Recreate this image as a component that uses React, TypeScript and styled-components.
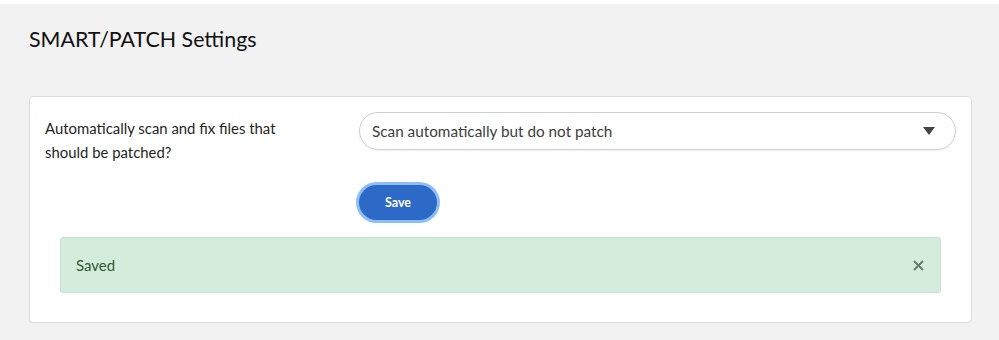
import React, { useState } from 'react';
import styled, { createGlobalStyle } from 'styled-components';

const GlobalStyle = createGlobalStyle`
  html, body {
    margin: 0;
    padding: 0;
    background: #ffffff;
  }
  body {
    font-family: Lato, 'Noto Sans', sans-serif;
    color: #222;
  }
`;

const Page = styled.div`
  margin-top: 4px;
  background: #f2f2f2;
  min-height: 336px;
  padding: 0 27px 0 29px;
  box-sizing: border-box;
`;

const Title = styled.h1`
  margin: 0;
  padding: 18px 0 40px;
  font-size: 21.4px;
  font-weight: 400;
  line-height: 34px;
  color: #111;
`;

const Card = styled.section`
  background: #fff;
  border: 1px solid #dcdcdc;
  border-radius: 4px;
  padding: 15px 15px 29px;
`;

const FormRow = styled.div`
  display: grid;
  grid-template-columns: 298px 1fr;
  column-gap: 16px;
  align-items: start;
`;

const Label = styled.label`
  max-width: 250px;
  font-size: 14.9px;
  line-height: 24px;
  color: #1f1f1f;
  padding-top: 4px;
`;

const SelectBox = styled.div`
  height: 38px;
  border: 1px solid #cdd0d6;
  border-radius: 19px;
  box-shadow: 0 1px 2px rgba(0, 0, 0, 0.06);
  display: flex;
  align-items: center;
  padding: 0 20px 0 12px;
  box-sizing: border-box;
  font-size: 15.3px;
  color: #3d3d3d;
  cursor: pointer;
`;

const SelectText = styled.span`
  flex: 1;
`;

const Arrow = styled.span`
  width: 0;
  height: 0;
  border-left: 6px solid transparent;
  border-right: 6px solid transparent;
  border-top: 8px solid #444;
`;

const Actions = styled.div`
  display: grid;
  grid-template-columns: 298px 1fr;
  column-gap: 16px;
  margin-top: 21px;
`;

const SaveButton = styled.button`
  grid-column: 2;
  justify-self: start;
  width: 78px;
  height: 35px;
  border: none;
  border-radius: 18px;
  background: #2d69c7;
  color: #fff;
  font-family: Lato, 'Noto Sans', sans-serif;
  font-size: 12.5px;
  font-weight: 700;
  box-shadow: 0 0 0 3px #8dbff7;
  cursor: pointer;
`;

const Alert = styled.div`
  margin: 17px 15px 0;
  background: #d4ecdb;
  border: 1px solid #c3e6cb;
  border-radius: 3px;
  padding: 15px;
  display: flex;
  align-items: center;
  font-size: 15px;
  line-height: 24px;
  color: #2f5a33;
`;

const AlertText = styled.span`
  flex: 1;
`;

const Close = styled.button`
  background: none;
  border: none;
  padding: 0;
  width: 14px;
  height: 14px;
  display: flex;
  align-items: center;
  justify-content: center;
  cursor: pointer;
`;

export default function App() {
  const [shown, setShown] = useState(true);
  return (
    <>
      <GlobalStyle />
      <Page>
        <Title>SMART/PATCH Settings</Title>
        <Card>
          <FormRow>
            <Label>Automatically scan and fix files that should be patched?</Label>
            <SelectBox>
              <SelectText>Scan automatically but do not patch</SelectText>
              <Arrow />
            </SelectBox>
          </FormRow>
          <Actions>
            <SaveButton>Save</SaveButton>
          </Actions>
          {shown && (
            <Alert>
              <AlertText>Saved</AlertText>
              <Close onClick={() => setShown(false)} aria-label="Close">
                <svg width="11" height="11" viewBox="0 0 11 11">
                  <path d="M1 1 L10 10 M10 1 L1 10" stroke="#6b7a6e" strokeWidth="2" />
                </svg>
              </Close>
            </Alert>
          )}
        </Card>
      </Page>
    </>
  );
}
